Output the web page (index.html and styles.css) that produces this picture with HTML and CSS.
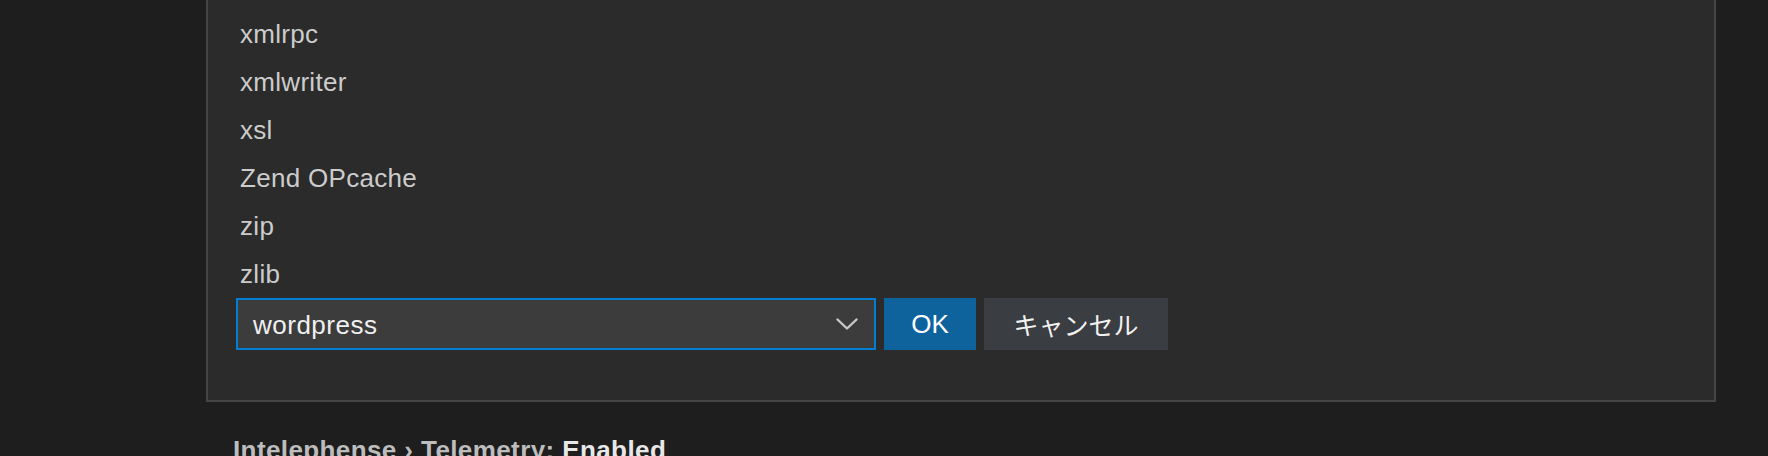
FILE: index.html
```html
<!DOCTYPE html>
<html lang="ja">
<head>
<meta charset="utf-8">
<title>Settings</title>
<link rel="stylesheet" href="styles.css">
</head>
<body>
<div class="editor">
  <section class="setting-panel">
    <ul class="ext-list">
      <li>xmlrpc</li>
      <li>xmlwriter</li>
      <li>xsl</li>
      <li>Zend OPcache</li>
      <li>zip</li>
      <li>zlib</li>
    </ul>
    <div class="add-row">
      <div class="select">
        <span class="select-value">wordpress</span>
        <svg class="chevron" width="22" height="12" viewBox="0 0 22 12" aria-hidden="true">
          <polyline points="1.5,1.5 11,10.5 20.5,1.5" fill="none" stroke="#c8c8c8" stroke-width="2.4" stroke-linecap="round" stroke-linejoin="round"/>
        </svg>
      </div>
      <button class="btn btn-primary">OK</button>
      <button class="btn btn-secondary">キャンセル</button>
    </div>
  </section>
  <div class="setting-title">
    <span class="category">Intelephense › Telemetry: </span><span class="label">Enabled</span>
  </div>
</div>
</body>
</html>
```

FILE: styles.css
```css
html, body {
  margin: 0;
  padding: 0;
  background: #1e1e1e;
  height: 456px;
  overflow: hidden;
}

body {
  font-family: "Liberation Sans", Arial, "Noto Sans CJK JP", sans-serif;
  font-size: 26px;
  color: #cccccc;
}

.editor {
  margin-left: 206px;
  width: 1510px;
}

.setting-panel {
  background: #2b2b2b;
  border: 2px solid #454545;
  border-top: none;
  padding: 10px 0 50px 28px;
}

.ext-list {
  list-style: none;
  margin: 0;
  padding: 0 0 0 4px;
}

.ext-list li {
  line-height: 48px;
  height: 48px;
  color: #cccccc;
  letter-spacing: 0.3px;
}

.add-row {
  display: flex;
  align-items: stretch;
  gap: 8px;
  height: 52px;
}

.select {
  box-sizing: border-box;
  width: 640px;
  height: 52px;
  background: #3c3c3c;
  border: 2px solid #007fd4;
  display: flex;
  align-items: center;
  justify-content: space-between;
  padding: 0 16px 0 15px;
  color: #f0f0f0;
}

.select-value {
  line-height: 1;
  padding-top: 1px;
  letter-spacing: 0.5px;
}

.chevron {
  display: block;
}

.btn {
  border: none;
  margin: 0;
  padding: 0;
  height: 52px;
  font-family: "Liberation Sans", Arial, "Noto Sans CJK JP", sans-serif;
  font-size: 26px;
  color: #ffffff;
}

.btn-primary {
  width: 92px;
  background: #0e639c;
}

.btn-secondary {
  width: 184px;
  background: #3a3d41;
  font-family: "Noto Sans CJK JP", sans-serif;
  font-size: 25px;
  color: #f2f2f2;
}

.setting-title {
  margin-top: 30px;
  padding-left: 27px;
  line-height: 36px;
  font-weight: 700;
  white-space: nowrap;
  letter-spacing: 0.4px;
}

.category {
  color: #bdbdbd;
}

.label {
  color: #e8e8e8;
}
```
